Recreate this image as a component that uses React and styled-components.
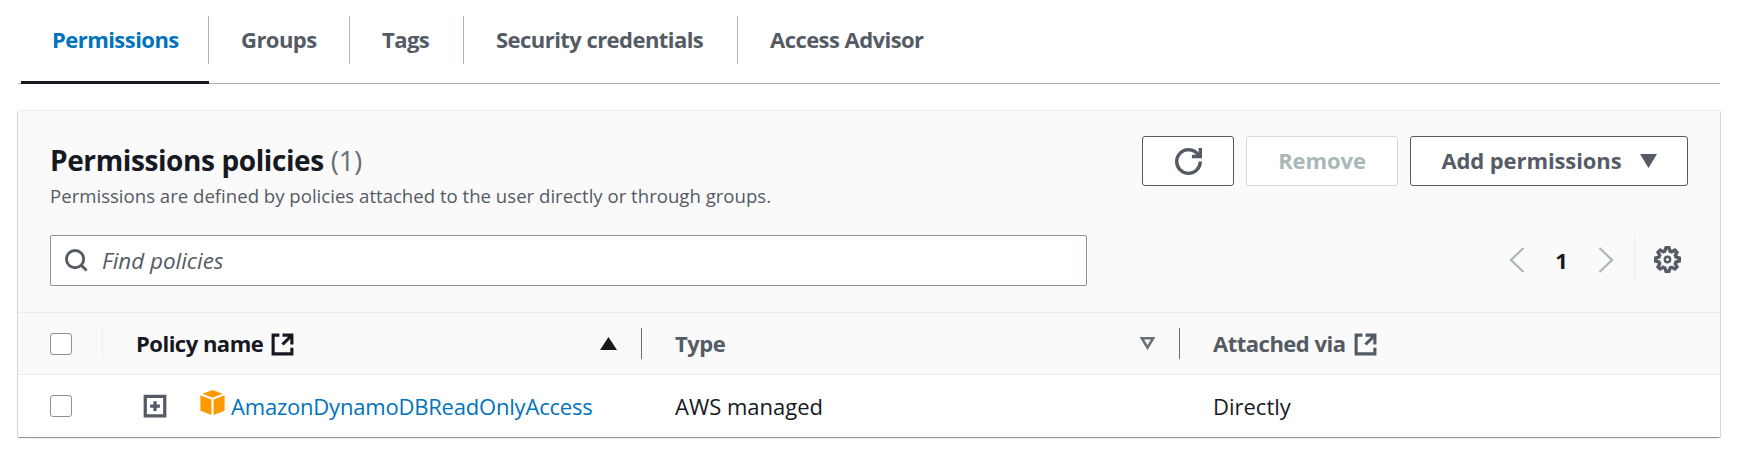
import React from "react";
import styled, { createGlobalStyle } from "styled-components";

const Global = createGlobalStyle`
  html, body { margin: 0; background: #fff; }
  body { font-family: "Open Sans", "Noto Sans", sans-serif; color: #16191f; }
`;

const Page = styled.div`
  width: 1746px;
  height: 454px;
  padding: 16px 26px 0 18px;
  box-sizing: border-box;
  overflow: hidden;
`;

const TabBar = styled.div`
  display: flex;
  padding-left: 3px;
  border-bottom: 1px solid #aab7b8;
`;

const Tab = styled.div`
  height: 68px;
  box-sizing: border-box;
  border-bottom: 3px solid ${p => (p.$active ? "#16191f" : "transparent")};
  margin-bottom: -1px;
`;

const TabLabel = styled.div`
  height: 48px;
  width: ${p => (p.$w ? `${p.$w}px` : "auto")};
  box-sizing: border-box;
  display: flex;
  align-items: center;
  padding: 0 0 2px ${p => (p.$active ? 31 : 32)}px;
  font-size: 22px;
  font-weight: 700;
  letter-spacing: -0.55px;
  color: ${p => (p.$active ? "#0073bb" : "#545b64")};
  border-right: ${p => (p.$w ? "1px solid #aab7b8" : "none")};
`;

const Card = styled.section`
  margin-top: 26px;
  background: #fff;
  border-top: 1px solid #eaeded;
  border-radius: 1px;
  box-shadow: 0 1px 1px 0 rgba(0, 28, 36, 0.3), 1px 1px 1px 0 rgba(0, 28, 36, 0.15), -1px 1px 1px 0 rgba(0, 28, 36, 0.15);
`;

const CardHeader = styled.header`
  background: #fafafa;
  height: 202px;
  box-sizing: border-box;
  padding: 25px 32px 0 32px;
  border-bottom: 1px solid #eaeded;
`;

const TopRow = styled.div`
  display: flex;
  justify-content: space-between;
  height: 99px;
`;

const Heading = styled.h2`
  margin: 6px 0 0;
  font-size: 28px;
  line-height: 36px;
  font-weight: 700;
  letter-spacing: -0.4px;
  color: #16191f;
`;

const Count = styled.span`
  font-weight: 400;
  color: #687078;
`;

const Description = styled.p`
  margin: 6px 0 0;
  font-size: 18.6px;
  line-height: 24px;
  color: #545b64;
`;

const Actions = styled.div`
  display: flex;
  gap: 12px;
  align-items: flex-start;
`;

const Button = styled.button`
  height: 50px;
  width: ${p => p.$w}px;
  box-sizing: border-box;
  display: flex;
  align-items: center;
  justify-content: center;
  gap: 18px;
  background: #fff;
  border: 1px solid ${p => (p.$disabled ? "#d5dbdb" : "#545b64")};
  border-radius: 3px;
  padding: 0;
  font-family: inherit;
  font-size: 22px;
  font-weight: 700;
  letter-spacing: -0.1px;
  color: ${p => (p.$disabled ? "#aab7b8" : "#545b64")};
`;

const RaisedText = styled.span`
  margin-bottom: 2px;
`;

const FilterRow = styled.div`
  display: flex;
  justify-content: space-between;
  align-items: flex-start;
`;

const SearchBox = styled.div`
  width: 1037px;
  height: 51px;
  box-sizing: border-box;
  display: flex;
  align-items: center;
  gap: 14px;
  padding: 0 0 0 14px;
  background: #fff;
  border: 1px solid #879596;
  border-radius: 2px;
`;

const Placeholder = styled.span`
  font-size: 22.4px;
  font-style: italic;
  color: #545b64;
`;

const Pager = styled.div`
  display: flex;
  align-items: center;
  height: 49px;
  margin-right: 7px;
`;

const PageNum = styled.span`
  width: 73px;
  text-align: center;
  font-size: 22px;
  font-weight: 700;
  color: #16191f;
`;

const PagerDivider = styled.div`
  width: 1px;
  height: 49px;
  margin: 0 19px 0 20px;
  background: #eaeded;
`;

const Row = styled.div`
  display: grid;
  grid-template-columns: 85px 539px 538px 1fr;
  align-items: center;
  height: ${p => p.$h}px;
  background: ${p => (p.$head ? "#fafafa" : "#fff")};
  border-bottom: ${p => (p.$head ? "1px solid #eaeded" : "none")};
  box-sizing: border-box;
`;

const CheckCell = styled.div`
  height: 31px;
  display: flex;
  align-items: center;
  padding-left: 32px;
  box-sizing: border-box;
  border-right: ${p => (p.$sep ? "1px solid #eaeded" : "none")};
`;

const Checkbox = styled.div`
  width: 22px;
  height: 22px;
  box-sizing: border-box;
  background: #fff;
  border: 1.5px solid #879596;
  border-radius: 3px;
`;

const HeadCell = styled.div`
  height: 31px;
  box-sizing: border-box;
  display: flex;
  align-items: center;
  padding: 0 24px 0 33px;
  font-size: 22px;
  font-weight: 700;
  letter-spacing: -0.5px;
  color: ${p => (p.$active ? "#16191f" : "#545b64")};
  border-right: ${p => (p.$sep ? `1px solid ${p.$sep}` : "none")};
`;

const HeadLabel = styled.span`
  flex: 1;
  display: flex;
  align-items: center;
  gap: 7px;
`;

const SortIcon = styled.svg`
  display: block;
  flex: none;
`;

const Cell = styled.div`
  display: flex;
  align-items: center;
  padding-left: 33px;
  font-size: 22px;
  color: #16191f;
`;

const NameCell = styled(Cell)`
  padding-left: 39px;
`;

const PolicyLink = styled.a`
  color: #0073bb;
  margin-left: 6px;
  letter-spacing: -0.2px;
`;

const IconSvg = styled.svg`
  display: block;
  flex: none;
  fill: none;
  stroke: currentColor;
  stroke-width: ${p => p.$sw || 2};
`;

const ExternalSvg = styled(IconSvg)`
  margin-top: 2px;
`;

const External = ({ color }) => (
  <ExternalSvg width="25" height="25" viewBox="0 0 16 16" style={{ color }}>
    <path d="M14 8.01v-6H8M14.02 2 8 8.01M6 2.01H2v12h12v-3.99" />
  </ExternalSvg>
);

const Cube = styled.svg`
  display: block;
  flex: none;
  fill: #ff9900;
  margin: -8px 0 0 32px;
`;

export default function App() {
  return (
    <Page>
      <Global />
      <TabBar>
        <Tab $active><TabLabel $active $w={188}>Permissions</TabLabel></Tab>
        <Tab><TabLabel $w={141}>Groups</TabLabel></Tab>
        <Tab><TabLabel $w={114}>Tags</TabLabel></Tab>
        <Tab><TabLabel $w={274}>Security credentials</TabLabel></Tab>
        <Tab><TabLabel>Access Advisor</TabLabel></Tab>
      </TabBar>
      <Card>
        <CardHeader>
          <TopRow>
            <div>
              <Heading>Permissions policies <Count>(1)</Count></Heading>
              <Description>Permissions are defined by policies attached to the user directly or through groups.</Description>
            </div>
            <Actions>
              <Button $w={92} aria-label="Refresh">
                <IconSvg width="27" height="27" viewBox="0 0 16 16">
                  <path d="M10 5h5V0" />
                  <path d="M15 8a6.99 6.99 0 0 1-7 7 6.99 6.99 0 0 1-7-7 6.99 6.99 0 0 1 7-7c2.63 0 4.91 1.45 6.1 3.58" />
                </IconSvg>
              </Button>
              <Button $w={152} $disabled><RaisedText>Remove</RaisedText></Button>
              <Button $w={278}>
                <RaisedText>Add permissions</RaisedText>
                <svg width="17" height="16" viewBox="0 0 17 16"><path d="M0 1h17L8.5 15z" fill="#545b64" /></svg>
              </Button>
            </Actions>
          </TopRow>
          <FilterRow>
            <SearchBox>
              <IconSvg width="23" height="23" viewBox="0 0 16 16" style={{ color: "#545b64" }}>
                <circle cx="7" cy="7" r="6" />
                <path d="m11 11 4 4" />
              </IconSvg>
              <Placeholder>Find policies</Placeholder>
            </SearchBox>
            <Pager>
              <svg width="16" height="26" viewBox="0 0 16 26" fill="none" stroke="#aab7b8" strokeWidth="2.2"><path d="M14.5 1 2 13l12.5 12" /></svg>
              <PageNum>1</PageNum>
              <svg width="16" height="26" viewBox="0 0 16 26" fill="none" stroke="#aab7b8" strokeWidth="2.2"><path d="M1.5 1 14 13 1.5 25" /></svg>
              <PagerDivider />
              <IconSvg $sw={2.3} width="27" height="27" viewBox="0 0 16 16" style={{ color: "#545b64" }}>
                <path d="M13.3 5.2l1.1-2.1L13 1.7l-2.1 1.1c-.3-.2-.7-.3-1.1-.4L9 0H7l-.8 2.3c-.3.1-.7.2-1 .4L3.1 1.6 1.6 3.1l1.1 2.1c-.2.3-.3.7-.4 1L0 7v2l2.3.8c.1.4.3.7.4 1.1L1.6 13 3 14.4l2.1-1.1c.3.2.7.3 1.1.4L7 16h2l.8-2.3c.4-.1.7-.3 1.1-.4l2.1 1.1 1.4-1.4-1.1-2.1c.2-.3.3-.7.4-1.1L16 9V7l-2.3-.8c-.1-.3-.2-.7-.4-1z" transform="translate(1 1) scale(.875)" />
                <circle cx="8" cy="8" r="1.6" strokeWidth="1.4" />
              </IconSvg>
            </Pager>
          </FilterRow>
        </CardHeader>
        <Row $head $h={62}>
          <CheckCell $sep><Checkbox /></CheckCell>
          <HeadCell $active $sep="#687078">
            <HeadLabel><RaisedText>Policy name</RaisedText> <External color="#16191f" /></HeadLabel>
            <SortIcon width="17" height="13" viewBox="0 0 17 13"><path d="M8.5 0 17 13H0z" fill="#16191f" /></SortIcon>
          </HeadCell>
          <HeadCell $sep="#687078">
            <HeadLabel><RaisedText>Type</RaisedText></HeadLabel>
            <SortIcon width="15" height="13" viewBox="0 0 15 13" fill="none" stroke="#687078" strokeWidth="2.6"><path d="M1.8 1.3h11.4L7.5 10.6z" /></SortIcon>
          </HeadCell>
          <HeadCell>
            <HeadLabel><RaisedText>Attached via</RaisedText> <External color="#545b64" /></HeadLabel>
          </HeadCell>
        </Row>
        <Row $h={62}>
          <CheckCell><Checkbox /></CheckCell>
          <NameCell>
            <IconSvg width="26" height="26" viewBox="0 0 16 16" style={{ color: "#545b64" }}>
              <path d="M2 2h12v12H2z" />
              <path d="M8 5v6M5 8h6" />
            </IconSvg>
            <Cube width="25" height="25" viewBox="0 0 25 25">
              <path d="M12.5 0 22.5 3.8l-10 4-10-4z" />
              <path d="M.4 5.2 11.4 9.4V25L.4 20.8z" />
              <path d="M24.6 5.2 13.6 9.4V25l11-4.2z" />
            </Cube>
            <PolicyLink>AmazonDynamoDBReadOnlyAccess</PolicyLink>
          </NameCell>
          <Cell>AWS managed</Cell>
          <Cell>Directly</Cell>
        </Row>
      </Card>
    </Page>
  );
}
